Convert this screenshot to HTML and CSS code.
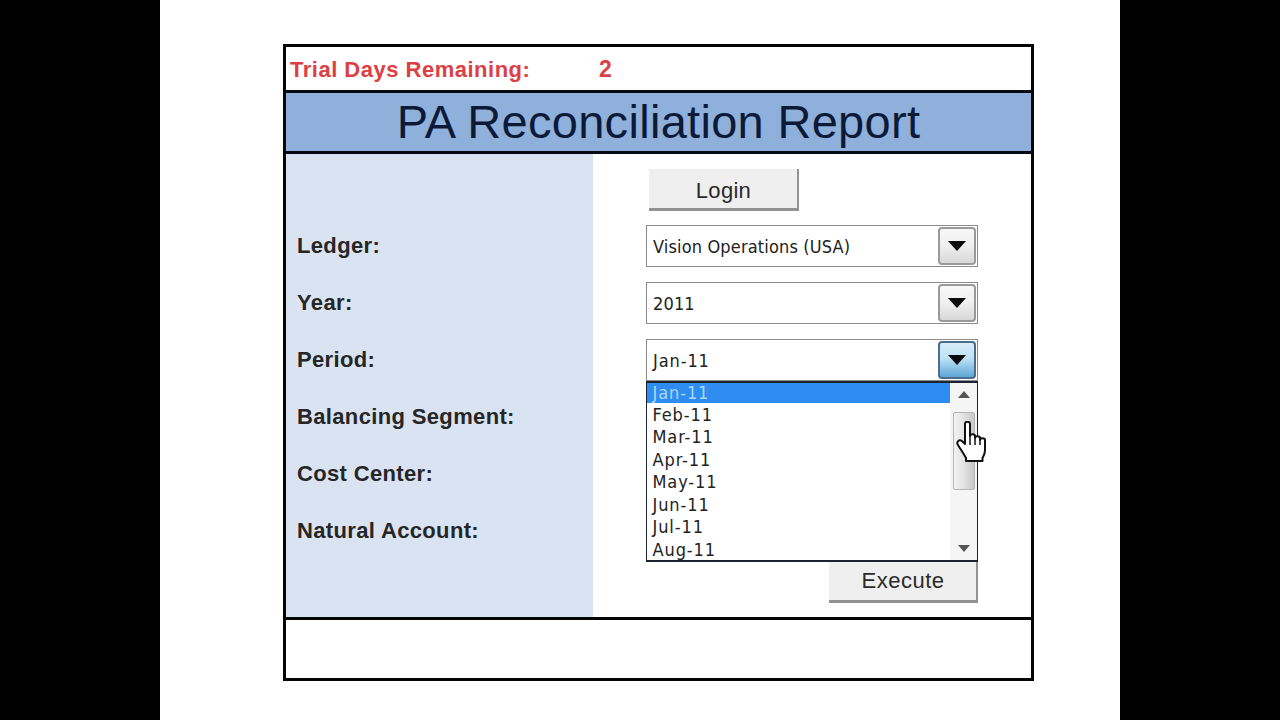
FILE: index.html
```html
<!DOCTYPE html>
<html lang="en">
<head>
<meta charset="utf-8">
<title>PA Reconciliation Report</title>
<link rel="stylesheet" href="styles.css">
</head>
<body>
<main class="stage">
  <section class="report">
    <header class="trial">
      <span class="trial-label">Trial Days Remaining:</span>
      <span class="trial-count">2</span>
    </header>
    <h1 class="title">PA Reconciliation Report</h1>
    <div class="form">
      <div class="labels">
        <div class="label">Ledger:</div>
        <div class="label">Year:</div>
        <div class="label">Period:</div>
        <div class="label">Balancing Segment:</div>
        <div class="label">Cost Center:</div>
        <div class="label">Natural Account:</div>
      </div>
      <div class="controls">
        <button class="btn btn-login">Login</button>
        <div class="combo">
          <span class="combo-value">Vision Operations (USA)</span>
          <span class="combo-btn"><svg class="tri" viewBox="0 0 18 10"><path d="M0 0h18L9 10z"/></svg></span>
        </div>
        <div class="combo">
          <span class="combo-value">2011</span>
          <span class="combo-btn"><svg class="tri" viewBox="0 0 18 10"><path d="M0 0h18L9 10z"/></svg></span>
        </div>
        <div class="combo combo-open">
          <span class="combo-value">Jan-11</span>
          <span class="combo-btn combo-btn-active"><svg class="tri" viewBox="0 0 18 10"><path d="M0 0h18L9 10z"/></svg></span>
          <div class="dropdown">
            <ul class="options">
              <li class="option option-selected">Jan-11</li>
              <li class="option">Feb-11</li>
              <li class="option">Mar-11</li>
              <li class="option">Apr-11</li>
              <li class="option">May-11</li>
              <li class="option">Jun-11</li>
              <li class="option">Jul-11</li>
              <li class="option">Aug-11</li>
            </ul>
            <div class="scrollbar">
              <svg class="sb-arrow sb-up" viewBox="0 0 12 7"><path d="M0 7L6 0l6 7z"/></svg>
              <div class="sb-thumb"></div>
              <svg class="sb-arrow sb-down" viewBox="0 0 12 7"><path d="M0 0h12L6 7z"/></svg>
            </div>
          </div>
          <svg class="cursor" viewBox="0 0 30 42">
            <path d="M9 3c0-3 5-3 5 0v12c0-2.500 5-2.500 5 0v2c0-2.500 5-2.500 5 0v2c0-2.500 5-2.500 5 0v10c0 4-1 5-2.500 8v3H10v-3c-2-4-5-8-8-13-2-3 1-6 4-4l3 3z" fill="#fff" stroke="#111" stroke-width="2" stroke-linejoin="round"/>
            <path d="M14 15v9M19 17v7M24 19v5" fill="none" stroke="#111" stroke-width="1.500"/>
          </svg>
        </div>
        <button class="btn btn-execute">Execute</button>
      </div>
    </div>
    <footer class="report-footer"></footer>
  </section>
</main>
</body>
</html>
```
FILE: styles.css
```css
* { box-sizing: border-box; }
html, body { margin: 0; height: 100%; background: #000; }
.stage {
  width: 960px;
  height: 720px;
  margin: 0 auto;
  padding: 44px 0 0 123px;
  background: #fff;
}
.report {
  width: 751px;
  height: 637px;
  border: 3px solid #050505;
  display: flex;
  flex-direction: column;
  font-family: "Liberation Sans", Arial, sans-serif;
}
.trial {
  height: 43px;
  display: flex;
  align-items: center;
  padding: 2px 0 0 4px;
  font-size: 22px;
  font-weight: 700;
  letter-spacing: 0.5px;
  color: #dd4044;
}
.trial-label { width: 309px; }
.trial-count { font-size: 23px; }
.title {
  margin: 0;
  height: 64px;
  border-top: 3px solid #050a14;
  border-bottom: 3px solid #050a14;
  background: #8fb0da;
  color: #0c1a38;
  font-size: 47px;
  font-weight: 400;
  letter-spacing: 0.3px;
  line-height: 58px;
  text-align: center;
}
.form { height: 463px; display: flex; }
.labels {
  width: 307px;
  padding: 63px 0 0 11px;
  background: #dae3f1;
}
.label {
  height: 57px;
  display: flex;
  align-items: center;
  font-size: 22px;
  font-weight: 700;
  letter-spacing: 0.35px;
  color: #262626;
}
.controls {
  flex: 1;
  padding: 15px 0 0 53px;
  display: flex;
  flex-direction: column;
  align-items: flex-start;
}
.btn {
  display: block;
  height: 42px;
  padding: 0 0 0 1px;
  border: 0;
  border-right: 2px solid #929292;
  border-bottom: 3px solid #929292;
  background: #efefef;
  color: #2a2a2a;
  font-family: "Liberation Sans", Arial, sans-serif;
  font-size: 22px;
  letter-spacing: 0.3px;
}
.btn-login { width: 150px; margin: 0 0 14px 3px; padding-top: 5px; }
.btn-execute { width: 149px; margin: 180px 0 0 183px; letter-spacing: 0.5px; }
.combo {
  position: relative;
  width: 332px;
  height: 42px;
  margin-bottom: 15px;
  border: 1.5px solid #8c8c8c;
  background: #fff;
  display: flex;
  align-items: center;
  justify-content: space-between;
}
.combo-open { margin-bottom: 0; }
.combo-value {
  padding: 0 0 0 6px;
  font-family: "DejaVu Sans Condensed", "DejaVu Sans", sans-serif;
  font-stretch: condensed;
  font-size: 18px;
  letter-spacing: 0.15px;
  color: #222;
}
.combo-open .combo-value { letter-spacing: 0.9px; }
.combo-btn {
  width: 38px;
  height: 38px;
  margin-right: 1px;
  display: flex;
  align-items: center;
  justify-content: center;
  border: 2px solid #9a9a9a;
  border-radius: 4px;
  background: linear-gradient(#f7f7f7, #f1f1f1 45%, #d8d8d8);
}
.combo-btn-active {
  border-color: #4d6d8c;
  background: linear-gradient(#d8ecf9, #bfe2f7 45%, #5ea6d6);
}
.tri { width: 18px; height: 10px; fill: #0a0a0a; }
.dropdown {
  position: absolute;
  left: -1.5px;
  top: 40.5px;
  width: 332px;
  height: 181px;
  display: flex;
  overflow: hidden;
  border: 1px solid #1c2430;
  border-width: 2px 1.5px 2px 1px;
  background: #fff;
}
.options {
  flex: 1;
  margin: 0;
  padding: 0;
  list-style: none;
  font-family: "DejaVu Sans Condensed", "DejaVu Sans", sans-serif;
  font-stretch: condensed;
  font-size: 18px;
  letter-spacing: 0.9px;
  color: #222;
}
.option {
  height: 22.5px;
  line-height: 24px;
  padding-left: 6px;
}
.option-selected {
  height: 20px;
  line-height: 20px;
  margin-bottom: 0;
  background: #2f8cf0;
  color: #a8d8f8;
}
.scrollbar {
  position: relative;
  width: 27px;
  background: #f5f5f5;
}
.sb-arrow { position: absolute; left: 8px; width: 12px; height: 7px; fill: #555; }
.sb-up { top: 8px; }
.sb-down { bottom: 8px; }
.sb-thumb {
  position: absolute;
  left: 3px;
  top: 29px;
  width: 22px;
  height: 78px;
  border: 1px solid #b5b5b5;
  border-radius: 2px;
  background: linear-gradient(90deg, #f2f2f2, #e2e2e2 50%, #c8c8c8);
}
.cursor {
  position: absolute;
  left: 309px;
  top: 81px;
  width: 30px;
  height: 42px;
}
.report-footer { height: 61px; border-top: 3px solid #050505; background: #fff; }
```
